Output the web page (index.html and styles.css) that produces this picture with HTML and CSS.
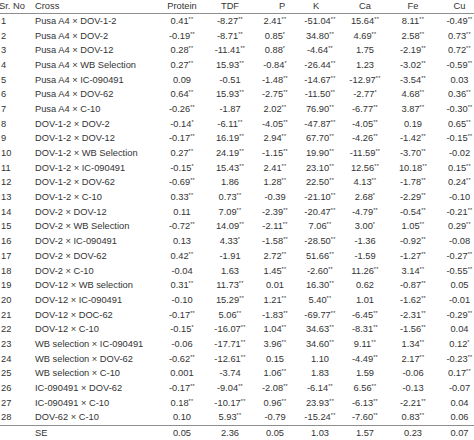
FILE: index.html
```html
<!DOCTYPE html>
<html>
<head>
<meta charset="utf-8">
<link rel="stylesheet" href="styles.css">
</head>
<body>
<div class="table">
  <div class="row head">
    <span class="sr">Sr. No</span><span class="cross">Cross</span><span>Protein</span><span>TDF</span><span class="hp">P</span><span class="hk">K</span><span>Ca</span><span>Fe</span><span class="cu">Cu</span>
  </div>
  <div class="row"><span class="sr">1</span><span class="cross">Pusa A4 × DOV-1-2</span><span>0.41<sup>**</sup></span><span>-8.27<sup>**</sup></span><span>2.41<sup>**</sup></span><span>-51.04<sup>**</sup></span><span>15.64<sup>**</sup></span><span>8.11<sup>**</sup></span><span class="cu">-0.49<sup>**</sup></span></div>
  <div class="row"><span class="sr">2</span><span class="cross">Pusa A4 × DOV-2</span><span>-0.19<sup>**</sup></span><span>-8.71<sup>**</sup></span><span>0.85<sup>*</sup></span><span>34.80<sup>**</sup></span><span>4.69<sup>**</sup></span><span>2.58<sup>**</sup></span><span class="cu">0.73<sup>**</sup></span></div>
  <div class="row"><span class="sr">3</span><span class="cross">Pusa A4 × DOV-12</span><span>0.28<sup>**</sup></span><span>-11.41<sup>**</sup></span><span>0.88<sup>*</sup></span><span>-4.64<sup>**</sup></span><span>1.75</span><span>-2.19<sup>**</sup></span><span class="cu">0.72<sup>**</sup></span></div>
  <div class="row"><span class="sr">4</span><span class="cross">Pusa A4 × WB Selection</span><span>0.27<sup>**</sup></span><span>15.93<sup>**</sup></span><span>-0.84<sup>*</sup></span><span>-26.44<sup>**</sup></span><span>1.23</span><span>-3.02<sup>**</sup></span><span class="cu">-0.59<sup>**</sup></span></div>
  <div class="row"><span class="sr">5</span><span class="cross">Pusa A4 × IC-090491</span><span>0.09</span><span>-0.51</span><span>-1.48<sup>**</sup></span><span>-14.67<sup>**</sup></span><span>-12.97<sup>**</sup></span><span>-3.54<sup>**</sup></span><span class="cu">0.03</span></div>
  <div class="row"><span class="sr">6</span><span class="cross">Pusa A4 × DOV-62</span><span>0.64<sup>**</sup></span><span>15.93<sup>**</sup></span><span>-2.75<sup>**</sup></span><span>-11.50<sup>**</sup></span><span>-2.77<sup>*</sup></span><span>4.68<sup>**</sup></span><span class="cu">0.36<sup>**</sup></span></div>
  <div class="row"><span class="sr">7</span><span class="cross">Pusa A4 × C-10</span><span>-0.26<sup>**</sup></span><span>-1.87</span><span>2.02<sup>**</sup></span><span>76.90<sup>**</sup></span><span>-6.77<sup>**</sup></span><span>3.87<sup>**</sup></span><span class="cu">-0.30<sup>**</sup></span></div>
  <div class="row"><span class="sr">8</span><span class="cross">DOV-1-2 × DOV-2</span><span>-0.14<sup>*</sup></span><span>-6.11<sup>**</sup></span><span>-4.05<sup>**</sup></span><span>-47.87<sup>**</sup></span><span>-4.05<sup>**</sup></span><span>0.19</span><span class="cu">0.65<sup>**</sup></span></div>
  <div class="row"><span class="sr">9</span><span class="cross">DOV-1-2 × DOV-12</span><span>-0.17<sup>**</sup></span><span>16.19<sup>**</sup></span><span>2.94<sup>**</sup></span><span>67.70<sup>**</sup></span><span>-4.26<sup>**</sup></span><span>-1.42<sup>**</sup></span><span class="cu">-0.15<sup>**</sup></span></div>
  <div class="row"><span class="sr">10</span><span class="cross">DOV-1-2 × WB Selection</span><span>0.27<sup>**</sup></span><span>24.19<sup>**</sup></span><span>-1.15<sup>**</sup></span><span>19.90<sup>**</sup></span><span>-11.59<sup>**</sup></span><span>-3.70<sup>**</sup></span><span class="cu">-0.02</span></div>
  <div class="row"><span class="sr">11</span><span class="cross">DOV-1-2 × IC-090491</span><span>-0.15<sup>*</sup></span><span>15.43<sup>**</sup></span><span>2.41<sup>**</sup></span><span>23.10<sup>**</sup></span><span>12.56<sup>**</sup></span><span>10.18<sup>**</sup></span><span class="cu">0.15<sup>**</sup></span></div>
  <div class="row"><span class="sr">12</span><span class="cross">DOV-1-2 × DOV-62</span><span>-0.69<sup>**</sup></span><span>1.86</span><span>1.28<sup>**</sup></span><span>22.50<sup>**</sup></span><span>4.13<sup>**</sup></span><span>-1.78<sup>**</sup></span><span class="cu">0.24<sup>**</sup></span></div>
  <div class="row"><span class="sr">13</span><span class="cross">DOV-1-2 × C-10</span><span>0.33<sup>**</sup></span><span>0.73<sup>**</sup></span><span>-0.39</span><span>-21.10<sup>**</sup></span><span>2.68<sup>*</sup></span><span>-2.29<sup>**</sup></span><span class="cu">-0.10</span></div>
  <div class="row"><span class="sr">14</span><span class="cross">DOV-2 × DOV-12</span><span>0.11</span><span>7.09<sup>**</sup></span><span>-2.39<sup>**</sup></span><span>-20.47<sup>**</sup></span><span>-4.79<sup>**</sup></span><span>-0.54<sup>**</sup></span><span class="cu">-0.21<sup>**</sup></span></div>
  <div class="row"><span class="sr">15</span><span class="cross">DOV-2 × WB Selection</span><span>-0.72<sup>**</sup></span><span>14.09<sup>**</sup></span><span>-2.11<sup>**</sup></span><span>7.06<sup>**</sup></span><span>3.00<sup>*</sup></span><span>1.05<sup>**</sup></span><span class="cu">0.29<sup>**</sup></span></div>
  <div class="row"><span class="sr">16</span><span class="cross">DOV-2 × IC-090491</span><span>0.13</span><span>4.33<sup>*</sup></span><span>-1.58<sup>**</sup></span><span>-28.50<sup>**</sup></span><span>-1.36</span><span>-0.92<sup>**</sup></span><span class="cu">-0.08</span></div>
  <div class="row"><span class="sr">17</span><span class="cross">DOV-2 × DOV-62</span><span>0.42<sup>**</sup></span><span>-1.91</span><span>2.72<sup>**</sup></span><span>51.66<sup>**</sup></span><span>-1.59</span><span>-1.27<sup>**</sup></span><span class="cu">-0.27<sup>**</sup></span></div>
  <div class="row"><span class="sr">18</span><span class="cross">DOV-2 × C-10</span><span>-0.04</span><span>1.63</span><span>1.45<sup>**</sup></span><span>-2.60<sup>**</sup></span><span>11.26<sup>**</sup></span><span>3.14<sup>**</sup></span><span class="cu">-0.55<sup>**</sup></span></div>
  <div class="row"><span class="sr">19</span><span class="cross">DOV-12 × WB selection</span><span>0.31<sup>**</sup></span><span>11.73<sup>**</sup></span><span>0.01</span><span>16.30<sup>**</sup></span><span>0.62</span><span>-0.87<sup>**</sup></span><span class="cu">0.05</span></div>
  <div class="row"><span class="sr">20</span><span class="cross">DOV-12 × IC-090491</span><span>-0.10</span><span>15.29<sup>**</sup></span><span>1.21<sup>**</sup></span><span>5.40<sup>**</sup></span><span>1.01</span><span>-1.62<sup>**</sup></span><span class="cu">-0.01</span></div>
  <div class="row"><span class="sr">21</span><span class="cross">DOV-12 × DOC-62</span><span>-0.17<sup>**</sup></span><span>5.06<sup>**</sup></span><span>-1.83<sup>**</sup></span><span>-69.77<sup>**</sup></span><span>-6.45<sup>**</sup></span><span>-2.31<sup>**</sup></span><span class="cu">-0.29<sup>**</sup></span></div>
  <div class="row"><span class="sr">22</span><span class="cross">DOV-12 × C-10</span><span>-0.15<sup>*</sup></span><span>-16.07<sup>**</sup></span><span>1.04<sup>**</sup></span><span>34.63<sup>**</sup></span><span>-8.31<sup>**</sup></span><span>-1.56<sup>**</sup></span><span class="cu">0.04</span></div>
  <div class="row"><span class="sr">23</span><span class="cross">WB selection × IC-090491</span><span>-0.06</span><span>-17.71<sup>**</sup></span><span>3.96<sup>**</sup></span><span>34.60<sup>**</sup></span><span>9.11<sup>**</sup></span><span>1.34<sup>**</sup></span><span class="cu">0.12<sup>*</sup></span></div>
  <div class="row"><span class="sr">24</span><span class="cross">WB selection × DOV-62</span><span>-0.62<sup>**</sup></span><span>-12.61<sup>**</sup></span><span>0.15</span><span>1.10</span><span>-4.49<sup>**</sup></span><span>2.17<sup>**</sup></span><span class="cu">-0.23<sup>**</sup></span></div>
  <div class="row"><span class="sr">25</span><span class="cross">WB selection × C-10</span><span>0.001</span><span>-3.74</span><span>1.06<sup>**</sup></span><span>1.83</span><span>1.59</span><span>-0.06</span><span class="cu">0.17<sup>**</sup></span></div>
  <div class="row"><span class="sr">26</span><span class="cross">IC-090491 × DOV-62</span><span>-0.17<sup>**</sup></span><span>-9.04<sup>**</sup></span><span>-2.08<sup>**</sup></span><span>-6.14<sup>**</sup></span><span>6.56<sup>**</sup></span><span>-0.13</span><span class="cu">-0.07</span></div>
  <div class="row"><span class="sr">27</span><span class="cross">IC-090491 × C-10</span><span>0.18<sup>**</sup></span><span>-10.17<sup>**</sup></span><span>0.96<sup>**</sup></span><span>23.93<sup>**</sup></span><span>-6.13<sup>**</sup></span><span>-2.21<sup>**</sup></span><span class="cu">0.04</span></div>
  <div class="row"><span class="sr">28</span><span class="cross">DOV-62 × C-10</span><span>0.10</span><span>5.93<sup>**</sup></span><span>-0.79</span><span>-15.24<sup>**</sup></span><span>-7.60<sup>**</sup></span><span>0.83<sup>**</sup></span><span class="cu">0.06</span></div>
  <div class="row se"><span class="sr"></span><span class="cross">SE</span><span>0.05</span><span>2.36</span><span>0.05</span><span>1.03</span><span>1.57</span><span>0.23</span><span class="cu">0.07</span></div>
</div>
</body>
</html>
```

FILE: styles.css
```css
html, body {
  margin: 0;
  padding: 0;
  background: #ffffff;
}

body {
  font-family: "Liberation Sans", Arial, sans-serif;
  font-size: 9.3px;
  color: #333333;
  overflow: hidden;
}

.table {
  width: 474px;
}

.row {
  display: grid;
  grid-template-columns: 35px 120px 54px 42px 48px 42px 48px 48px 37px;
  height: 14.7px;
  align-items: center;
  text-align: center;
  white-space: nowrap;
}

.row.head {
  height: 12.5px;
  border-bottom: 1.5px solid #8f8f8f;
}

.row.se {
  border-top: 1.5px solid #8f8f8f;
}

.sr {
  text-align: left;
  padding-left: 1px;
}

.head .sr {
  padding-left: 0;
  margin-left: -1px;
}

.cross {
  text-align: left;
}

.cu {
  padding-left: 8px;
}

.hp {
  padding-left: 14px;
}

.hk {
  padding-right: 8px;
}

sup {
  font-size: 5.5px;
  line-height: 0;
  vertical-align: 3px;
  letter-spacing: 0.3px;
}
```
